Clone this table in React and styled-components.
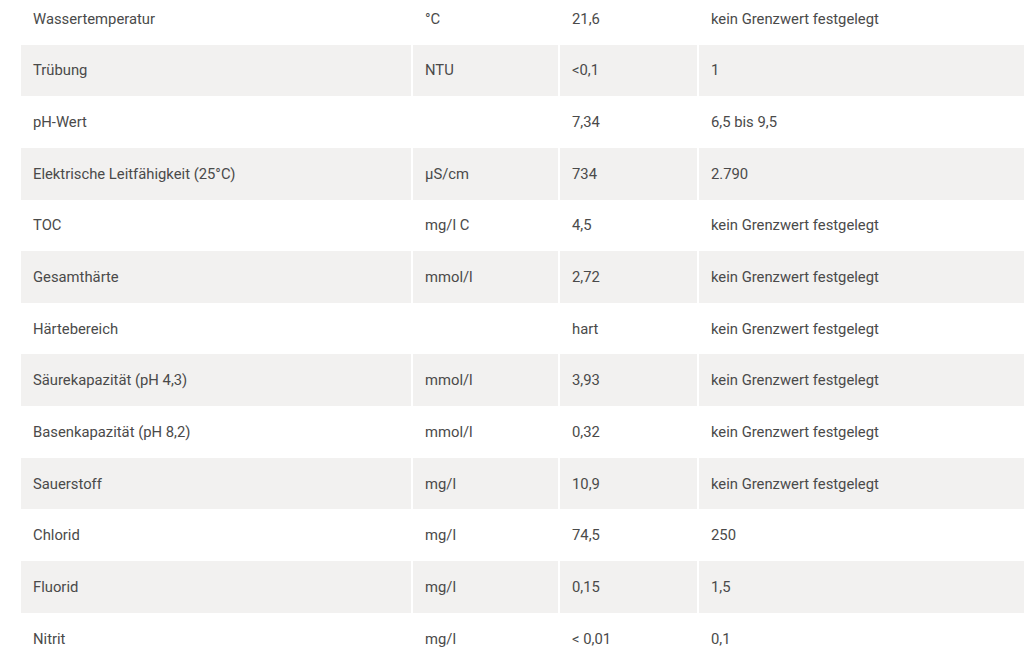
import React from 'react';
import styled, { createGlobalStyle } from 'styled-components';

const rows = [
  ['Wassertemperatur', '°C', '21,6', 'kein Grenzwert festgelegt'],
  ['Trübung', 'NTU', '<0,1', '1'],
  ['pH-Wert', '', '7,34', '6,5 bis 9,5'],
  ['Elektrische Leitfähigkeit (25°C)', 'µS/cm', '734', '2.790'],
  ['TOC', 'mg/l C', '4,5', 'kein Grenzwert festgelegt'],
  ['Gesamthärte', 'mmol/l', '2,72', 'kein Grenzwert festgelegt'],
  ['Härtebereich', '', 'hart', 'kein Grenzwert festgelegt'],
  ['Säurekapazität (pH 4,3)', 'mmol/l', '3,93', 'kein Grenzwert festgelegt'],
  ['Basenkapazität (pH 8,2)', 'mmol/l', '0,32', 'kein Grenzwert festgelegt'],
  ['Sauerstoff', 'mg/l', '10,9', 'kein Grenzwert festgelegt'],
  ['Chlorid', 'mg/l', '74,5', '250'],
  ['Fluorid', 'mg/l', '0,15', '1,5'],
  ['Nitrit', 'mg/l', '< 0,01', '0,1'],
];

const GlobalStyle = createGlobalStyle`
  html, body {
    margin: 0;
    padding: 0;
    background: #fff;
    overflow: hidden;
  }
  body {
    font-family: Roboto, "Liberation Sans", sans-serif;
  }
`;

const Page = styled.div`
  padding-left: 19px;
  margin-top: -7px;
`;

const Table = styled.table`
  width: 1010px;
  table-layout: fixed;
  border-collapse: separate;
  border-spacing: 2px 0;
`;

const Col = styled.col`
  width: ${(p) => p.$w}px;
`;

const Row = styled.tr`
  background: ${(p) => (p.$striped ? '#f2f1f0' : '#fff')};
`;

const Cell = styled.td`
  box-sizing: border-box;
  height: 51.65px;
  padding: 0 12px;
  vertical-align: middle;
  font-size: 14.8px;
  color: #4a4a4a;
  white-space: nowrap;
  background: inherit;
`;

export default function App() {
  return (
    <>
      <GlobalStyle />
      <Page>
        <Table>
          <colgroup>
            <Col $w={390} />
            <Col $w={145} />
            <Col $w={137} />
            <Col $w={330} />
          </colgroup>
          <tbody>
            {rows.map((row, i) => (
              <Row key={row[0]} $striped={i % 2 === 1}>
                {row.map((value, j) => (
                  <Cell key={j}>{value}</Cell>
                ))}
              </Row>
            ))}
          </tbody>
        </Table>
      </Page>
    </>
  );
}
